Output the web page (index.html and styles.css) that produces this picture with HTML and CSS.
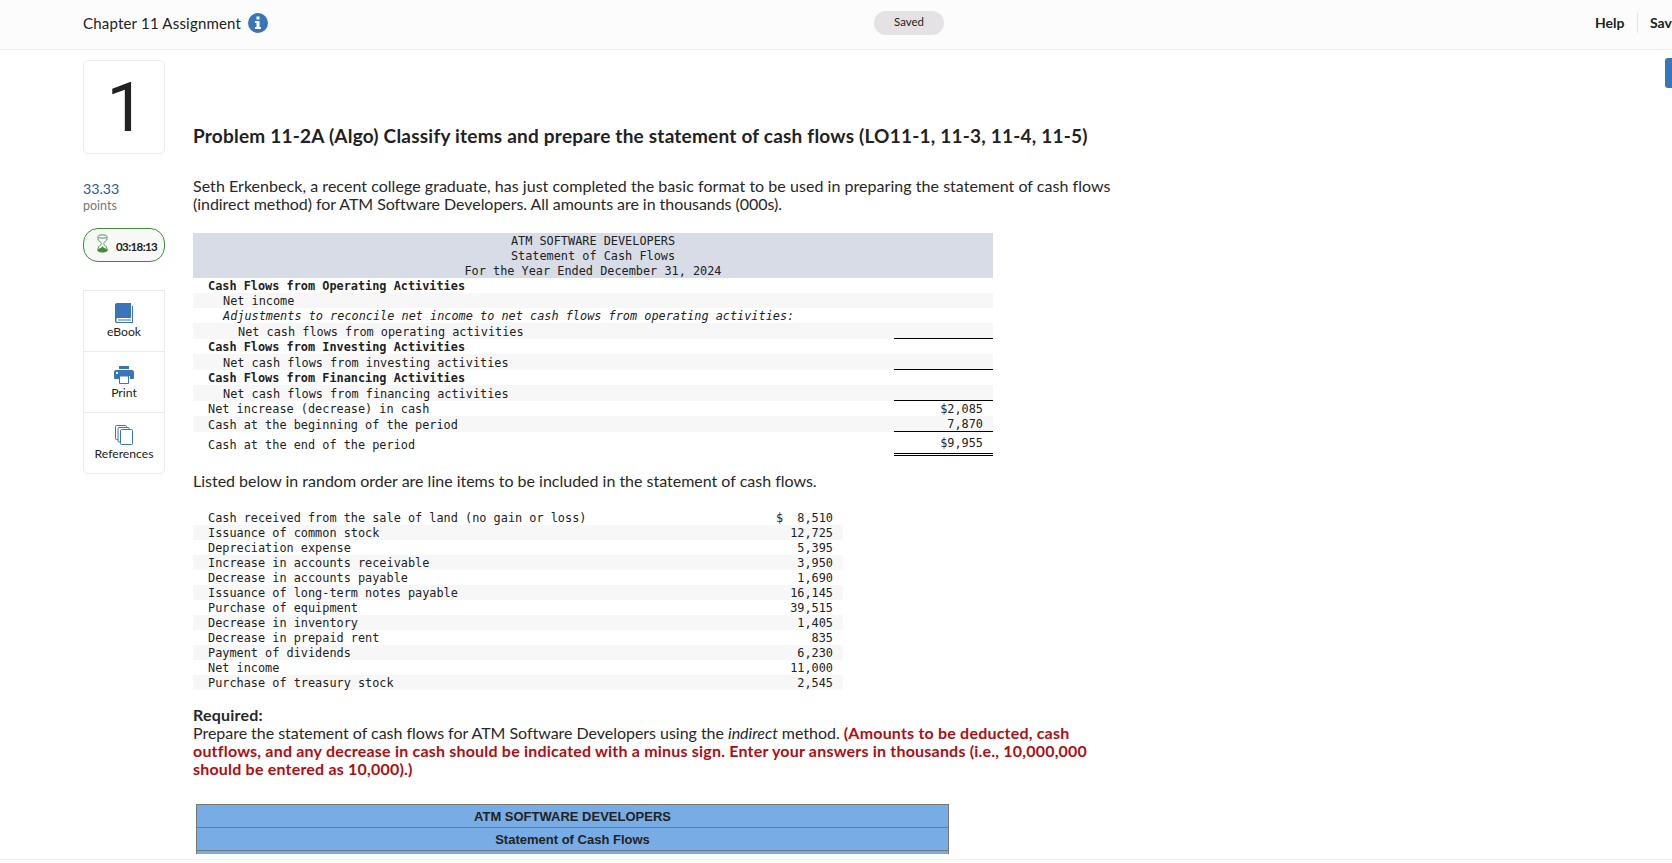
FILE: index.html
```
<!DOCTYPE html>
<html>
<head>
    <meta charset="UTF-8">
    <title>Chapter 11 Assignment</title>
    <link rel="stylesheet" href="styles.css">
</head>
<body>
    <!-- Top Bar -->
    <header class="top-bar">
        <div class="assignment">
            <span class="assignment-title">Chapter 11 Assignment</span>
            <svg class="info-icon" width="20" height="20" viewBox="0 0 20 20">
                <circle cx="10" cy="10" r="10" fill="#3975b9"/>
                <path d="M8.5 3.5h3v3h-3zM7 8h4.5v6H13v2H7v-2h1.500v-4H7z" fill="#fff"/>
            </svg>
        </div>
        <span class="saved">Saved</span>
        <nav class="top-links">
            <a class="help">Help</a>
            <a class="save-exit">Save</a>
        </nav>
    </header>

    <div class="page">
        <!-- Left Column: Question Number, Points, Tools -->
        <aside class="sidebar">
            <div class="question-number">1</div>
            <div class="points-value">33.33</div>
            <div class="points-label">points</div>
            <div class="timer">
                <svg width="11" height="19" viewBox="0 0 11 19" fill="none" stroke="#5d9069">
                    <ellipse cx="5.500" cy="2.500" rx="4.500" ry="1.700"/>
                    <path d="M1 3v2c0 2 3.500 3 3.500 4.500S1 12 1 14.500V17M10 3v2c0 2-3.500 3-3.500 4.500S10 12 10 14.500V17"/>
                    <path d="M1 15.500c1.500-.3 3-1.200 4.500-2.500 1.500 1.300 3 2.200 4.500 2.500v1.300C8.500 18.500 2.500 18.500 1 16.800z" fill="#458a3b" stroke="#458a3b"/>
                </svg>
                <span>03:18:13</span>
            </div>
            <div class="tools">
                <a class="tool">
                    <svg width="18" height="20" viewBox="0 0 18 20">
                        <path d="M2 0h14v15H2.500C1 15 1 19 2.500 19H17V3h1v17H2c-1.300 0-2-1-2-2V2C0 .8.8 0 2 0z" fill="#3975b9"/>
                        <path d="M3 17h13" stroke="#3975b9"/>
                    </svg>
                    <span>eBook</span>
                </a>
                <a class="tool">
                    <svg width="20" height="18" viewBox="0 0 20 18">
                        <path d="M5 0h10v3H5zM2 4h16q2 0 2 2v6q0 1-1 1h-3v-3H5v3H1q-1 0-1-1V6q0-2 2-2z" fill="#3975b9"/>
                        <path d="M5.500 10h9v7.500h-9z" fill="#fff" stroke="#3975b9"/>
                        <path d="M2 6h2v2H2z" fill="#fff"/>
                    </svg>
                    <span>Print</span>
                </a>
                <a class="tool">
                    <svg width="18" height="20" viewBox="0 0 18 20" fill="#fff" stroke="#3975b9">
                        <rect x=".5" y=".5" width="11" height="14" rx="1"/>
                        <rect x="3" y="2.500" width="11" height="14.500" rx="1"/>
                        <rect x="5.500" y="4.500" width="12" height="15" rx="1"/>
                    </svg>
                    <span>References</span>
                </a>
            </div>
        </aside>

        <!-- Main Column: Problem Text -->
        <main class="problem">
            <h1>Problem 11-2A (Algo) Classify items and prepare the statement of cash flows (LO11-1, 11-3, 11-4, 11-5)</h1>

            <p class="intro">Seth Erkenbeck, a recent college graduate, has just completed the basic format to be used in preparing the statement of cash flows<br>
            <span class="intro-end">(indirect method) for ATM Software Developers. All amounts are in thousands (000s).</span></p>

            <table class="data-table statement">
                <thead>
                    <tr><th colspan="2">ATM SOFTWARE DEVELOPERS</th></tr>
                    <tr><th colspan="2">Statement of Cash Flows</th></tr>
                    <tr><th colspan="2">For the Year Ended December 31, 2024</th></tr>
                </thead>
                <tbody>
                    <tr><td class="section">Cash Flows from Operating Activities</td><td></td></tr>
                    <tr><td class="indent">Net income</td><td></td></tr>
                    <tr><td class="indent note">Adjustments to reconcile net income to net cash flows from operating activities:</td><td></td></tr>
                    <tr><td class="indent-more">Net cash flows from operating activities</td><td class="subtotal"></td></tr>
                    <tr><td class="section">Cash Flows from Investing Activities</td><td></td></tr>
                    <tr><td class="indent">Net cash flows from investing activities</td><td class="subtotal"></td></tr>
                    <tr><td class="section">Cash Flows from Financing Activities</td><td></td></tr>
                    <tr><td class="indent">Net cash flows from financing activities</td><td class="subtotal"></td></tr>
                    <tr><td>Net increase (decrease) in cash</td><td>$2,085</td></tr>
                    <tr><td>Cash at the beginning of the period</td><td class="subtotal">7,870</td></tr>
                    <tr><td>Cash at the end of the period</td><td class="total">$9,955</td></tr>
                </tbody>
            </table>

            <p class="list-intro">Listed below in random order are line items to be included in the statement of cash flows.</p>

            <table class="data-table items">
                <tbody>
                    <tr><td>Cash received from the sale of land (no gain or loss)</td><td>$&nbsp; 8,510</td></tr>
                    <tr><td>Issuance of common stock</td><td>12,725</td></tr>
                    <tr><td>Depreciation expense</td><td>5,395</td></tr>
                    <tr><td>Increase in accounts receivable</td><td>3,950</td></tr>
                    <tr><td>Decrease in accounts payable</td><td>1,690</td></tr>
                    <tr><td>Issuance of long-term notes payable</td><td>16,145</td></tr>
                    <tr><td>Purchase of equipment</td><td>39,515</td></tr>
                    <tr><td>Decrease in inventory</td><td>1,405</td></tr>
                    <tr><td>Decrease in prepaid rent</td><td>835</td></tr>
                    <tr><td>Payment of dividends</td><td>6,230</td></tr>
                    <tr><td>Net income</td><td>11,000</td></tr>
                    <tr><td>Purchase of treasury stock</td><td>2,545</td></tr>
                </tbody>
            </table>

            <p class="required"><b>Required:</b><br>
            Prepare the statement of cash flows for ATM Software Developers using the <i>indirect</i> method. <strong>(Amounts to be deducted, cash<br>
            outflows, and any decrease in cash should be indicated with a minus sign. Enter your answers in thousands (i.e., 10,000,000<br>
            should be entered as 10,000).)</strong></p>

            <!-- Answer Sheet -->
            <table class="answer-sheet">
                <tr><th>ATM SOFTWARE DEVELOPERS</th></tr>
                <tr><th>Statement of Cash Flows</th></tr>
                <tr><th></th></tr>
            </table>
        </main>

        <div class="side-button"></div>
    </div>

    <footer class="bottom-bar"></footer>
</body>
</html>
```
FILE: styles.css
```
/* General Styling */
* {
    box-sizing: border-box;
}

body {
    display: flex;
    flex-direction: column;
    height: 863px;
    margin: 0;
    overflow: hidden;
    background-color: #fff;
    color: #222;
    font-family: Lato, sans-serif;
    font-size: 16px;
    line-height: 18px;
}

h1, p {
    margin: 0;
}

svg {
    display: block;
}

/* Top Bar */
.top-bar {
    display: grid;
    grid-template-columns: 791px 70px 1fr;
    align-items: center;
    flex: none;
    height: 50px;
    padding: 0 0 3px 83px;
    border-bottom: 1px solid #eee;
    background-color: #fcfcfc;
}

.assignment {
    display: flex;
    align-items: center;
    gap: 7px;
}

.assignment-title {
    width: 158px;
    padding-bottom: 1px;
    font-size: 15px;
    letter-spacing: 0.2px;
    white-space: nowrap;
}

.saved {
    height: 24px;
    border-radius: 12px;
    background-color: #e4e2e5;
    font-size: 11.500px;
    line-height: 22px;
    text-align: center;
}

.top-links {
    display: flex;
    align-items: center;
    justify-self: end;
    width: 77px;
    overflow: hidden;
    font-size: 14px;
    font-weight: bold;
    line-height: 20px;
    white-space: nowrap;
}

.help {
    flex: none;
    width: 43px;
    border-right: 1px solid #e4e4e4;
}

.save-exit {
    flex: none;
    padding-left: 12px;
}

/* Page Columns */
.page {
    display: flex;
    flex: none;
    height: 804px;
    padding-left: 83px;
    overflow: hidden;
}

.sidebar {
    flex: none;
    width: 82px;
    margin-right: 28px;
    padding-top: 10px;
}

.question-number {
    height: 94px;
    padding-left: 4px;
    border: 1px solid #eaeaea;
    border-radius: 5px;
    font-family: Roboto, sans-serif;
    font-size: 69px;
    line-height: 93px;
    text-align: center;
}

.points-value {
    margin-top: 26px;
    color: #2a5a94;
    font-size: 14.200px;
}

.points-label {
    color: #777;
    font-size: 12.500px;
    line-height: 16px;
}

.timer {
    display: flex;
    align-items: center;
    gap: 8px;
    height: 34px;
    margin-top: 14px;
    padding: 0 0 0 13px;
    border: 1px solid #458a3b;
    border-radius: 15px;
    background-color: #f6f9f6;
    font-size: 11.500px;
    font-weight: bold;
    letter-spacing: -0.6px;
}

.timer svg {
    margin-bottom: 3px;
}

.timer span {
    padding-top: 4px;
}

.tools {
    margin-top: 28px;
    border: 1px solid #eaeaea;
    border-radius: 0 0 5px 5px;
}

.tool {
    display: flex;
    flex-direction: column;
    align-items: center;
    justify-content: flex-end;
    height: 61px;
    padding-bottom: 10px;
    border-bottom: 1px solid #eaeaea;
    font-size: 12.200px;
}

.tool:last-child {
    height: 60px;
    border-bottom: none;
}

/* Problem Text */
.problem {
    flex: none;
    width: 930px;
    color: #282828;
}

h1 {
    margin-top: 74px;
    color: #222;
    font-size: 19px;
    letter-spacing: 0.220px;
    line-height: 24px;
    white-space: nowrap;
}

.intro {
    margin-top: 29px;
    letter-spacing: 0.04px;
    white-space: nowrap;
}

.intro-end {
    letter-spacing: -0.05px;
}

/* Monospaced Tables */
.data-table {
    border-collapse: separate;
    border-spacing: 0;
    color: #222;
    font-family: "DejaVu Sans Mono", monospace;
    font-size: 11.870px;
    line-height: 13px;
}

.data-table th {
    padding: 2px 0 0;
    background-color: #d8dce6;
    font-weight: normal;
}

.data-table td {
    height: 15px;
    padding: 2px 10px 0 15px;
    white-space: nowrap;
}

.data-table td:last-child {
    padding-left: 0;
    text-align: right;
}

.data-table tbody tr:nth-child(even) {
    background-color: #f7f7f7;
}

.statement {
    width: 800px;
    margin-top: 20px;
}

.statement td:last-child {
    width: 99px;
}

.statement .section {
    font-weight: bold;
}

.statement .indent {
    padding-left: 30px;
}

.statement .indent-more {
    padding-left: 45px;
}

.statement .note {
    font-style: italic;
}

.statement .subtotal {
    height: 16px;
    border-bottom: 1px solid #000;
}

.statement .total {
    height: 24px;
    border-bottom: 3px double #000;
}

.list-intro {
    margin-top: 16px;
    letter-spacing: -0.01px;
}

.items {
    width: 650px;
    margin-top: 20px;
}

/* Instructions */
.required {
    margin-top: 16px;
    letter-spacing: -0.03px;
    white-space: nowrap;
}

.required b,
.required strong {
    letter-spacing: 0.2px;
}

.required strong {
    color: #b00d12;
}

/* Answer Sheet */
.answer-sheet {
    width: 753px;
    margin: 26px 0 0 3px;
    border-collapse: collapse;
    background-color: #78ace5;
    color: #222;
    font-family: "Liberation Sans", sans-serif;
    font-size: 13px;
}

.answer-sheet th {
    height: 23px;
    padding: 2px 0 0;
    border: 1px solid #777;
}

/* Blue Button at Right Edge */
.side-button {
    flex: none;
    width: 20px;
    height: 30px;
    margin: 8px 0 0 542px;
    border-radius: 3px;
    background-color: #3975b9;
}

.bottom-bar {
    margin-top: 5px;
    flex: 1;
    border-top: 1px solid #eee;
    background-color: #fcfcfc;
}
```
